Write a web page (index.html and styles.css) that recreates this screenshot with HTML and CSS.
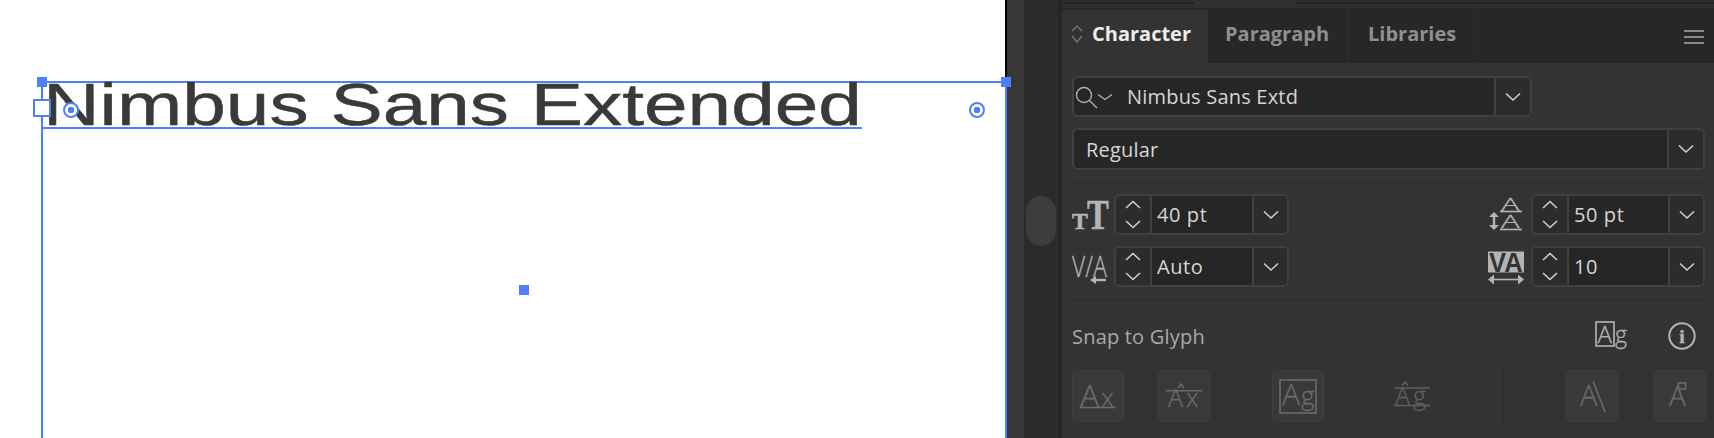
FILE: index.html
```html
<!DOCTYPE html>
<html lang="en">
<head>
  <meta charset="utf-8" />
  <title>Character panel</title>
  <link rel="stylesheet" href="styles.css">
</head>
<body>
  <div class="canvas">
    <div class="frame">
      <h1 class="sample">Nimbus Sans Extended</h1>
      <span class="handle handle-tl"></span>
      <span class="handle handle-tr"></span>
      <span class="handle handle-mid"></span>
      <span class="port"></span>
      <span class="target target-l"></span>
      <span class="target target-r"></span>
    </div>
  </div>

  <div class="rail"></div>
  <div class="dock"><div class="thumb"></div></div>

  <div class="panel">
    <div class="top-strip">
      <div class="strip-row"><div class="strip-tab"></div></div>
    </div>

    <div class="tabs">
      <div class="tab tab-on">
        <svg class="collapse" width="12" height="18" viewBox="0 0 12 18">
          <polyline points="1,6 6,1 11,6" />
          <polyline points="1,11 6,17 11,11" />
        </svg>
        <span>Character</span>
      </div>
      <div class="tab tab-para">Paragraph</div>
      <div class="tab tab-lib">Libraries</div>
      <div class="menu"><i></i><i></i><i></i></div>
    </div>

    <div class="body">
      <div class="box font-box">
        <div class="search">
          <svg width="40" height="30" viewBox="0 0 40 30">
            <circle cx="9" cy="12" r="7.5" />
            <line x1="14.500" y1="17.500" x2="22" y2="25" />
            <polyline points="23,11.500 30,16.500 37,11.500" />
          </svg>
        </div>
        <div class="box-value">Nimbus Sans Extd</div>
        <div class="box-arrow">
          <svg class="chev" width="16" height="10" viewBox="0 0 16 10"><polyline points="1,1.5 8,8 15,1.5" /></svg>
        </div>
      </div>

      <div class="box style-box">
        <div class="box-value">Regular</div>
        <div class="box-arrow">
          <svg class="chev" width="16" height="10" viewBox="0 0 16 10"><polyline points="1,1.5 8,8 15,1.5" /></svg>
        </div>
      </div>

      <hr class="rule rule-top">

      <div class="fields">
        <div class="field">
          <svg class="ico" width="42" height="36" viewBox="0 0 42 36">
            <text class="serif-b" x="0" y="31.500" font-size="24" textLength="16" lengthAdjust="spacingAndGlyphs">T</text>
            <text class="serif-b" x="15" y="31.500" font-size="42" textLength="22" lengthAdjust="spacingAndGlyphs">T</text>
          </svg>
          <div class="box num-box">
            <div class="spin">
              <svg class="chev" width="16" height="9" viewBox="0 0 16 9"><polyline points="1,8 8,1.5 15,8" /></svg>
              <svg class="chev" width="16" height="9" viewBox="0 0 16 9"><polyline points="1,1 8,7.5 15,1" /></svg>
            </div>
            <div class="box-value">40 pt</div>
            <div class="box-arrow">
              <svg class="chev" width="16" height="10" viewBox="0 0 16 10"><polyline points="1,1.5 8,8 15,1.5" /></svg>
            </div>
          </div>
        </div>

        <div class="field">
          <svg class="ico" width="43" height="38" viewBox="0 0 43 38">
            <text class="thin" x="13" y="14.500" font-size="19" textLength="19" lengthAdjust="spacingAndGlyphs">A</text>
            <line x1="12" y1="15.500" x2="34" y2="15.500" />
            <text class="thin" x="13" y="32" font-size="19" textLength="19" lengthAdjust="spacingAndGlyphs">A</text>
            <line x1="12" y1="33.500" x2="34" y2="33.500" />
            <line class="heavy" x1="6" y1="19" x2="6" y2="30" />
            <polygon class="fill" points="1,21 6,16 11,21" />
            <polygon class="fill" points="1,29 6,34 11,29" />
          </svg>
          <div class="box num-box">
            <div class="spin">
              <svg class="chev" width="16" height="9" viewBox="0 0 16 9"><polyline points="1,8 8,1.5 15,8" /></svg>
              <svg class="chev" width="16" height="9" viewBox="0 0 16 9"><polyline points="1,1 8,7.5 15,1" /></svg>
            </div>
            <div class="box-value">50 pt</div>
            <div class="box-arrow">
              <svg class="chev" width="16" height="10" viewBox="0 0 16 10"><polyline points="1,1.5 8,8 15,1.5" /></svg>
            </div>
          </div>
        </div>

        <div class="field">
          <svg class="ico" width="42" height="36" viewBox="0 0 42 36">
            <text class="thin" x="0" y="27.500" font-size="30" textLength="35" lengthAdjust="spacingAndGlyphs">V/A</text>
            <line class="heavy" x1="22" y1="31" x2="34" y2="31" />
            <polygon class="fill" points="18,31 24,27 24,35" />
          </svg>
          <div class="box num-box">
            <div class="spin">
              <svg class="chev" width="16" height="9" viewBox="0 0 16 9"><polyline points="1,8 8,1.5 15,8" /></svg>
              <svg class="chev" width="16" height="9" viewBox="0 0 16 9"><polyline points="1,1 8,7.5 15,1" /></svg>
            </div>
            <div class="box-value">Auto</div>
            <div class="box-arrow">
              <svg class="chev" width="16" height="10" viewBox="0 0 16 10"><polyline points="1,1.5 8,8 15,1.5" /></svg>
            </div>
          </div>
        </div>

        <div class="field">
          <svg class="ico" width="43" height="36" viewBox="0 0 43 36">
            <rect class="fill" x="0" y="2.500" width="36" height="21" />
            <text class="va" x="1" y="22.500" font-size="27" textLength="34" lengthAdjust="spacingAndGlyphs">VA</text>
            <line x1="3" y1="30.500" x2="33" y2="30.500" />
            <polygon class="fill" points="0,30.500 6,25.500 6,35.500" />
            <polygon class="fill" points="36,30.500 30,25.500 30,35.500" />
          </svg>
          <div class="box num-box">
            <div class="spin">
              <svg class="chev" width="16" height="9" viewBox="0 0 16 9"><polyline points="1,8 8,1.5 15,8" /></svg>
              <svg class="chev" width="16" height="9" viewBox="0 0 16 9"><polyline points="1,1 8,7.5 15,1" /></svg>
            </div>
            <div class="box-value">10</div>
            <div class="box-arrow">
              <svg class="chev" width="16" height="10" viewBox="0 0 16 10"><polyline points="1,1.5 8,8 15,1.5" /></svg>
            </div>
          </div>
        </div>
      </div>

      <hr class="rule rule-bottom">

      <div class="snap-head">
        <span class="snap-label">Snap to Glyph</span>
        <svg class="ico snap-ag" width="34" height="30" viewBox="0 0 34 30">
          <rect x="1" y="1" width="18" height="24" />
          <text class="thin" x="2.500" y="22" font-size="24">A</text>
          <text class="thin" x="20" y="22" font-size="23">g</text>
        </svg>
        <svg class="ico info" width="30" height="30" viewBox="0 0 30 30">
          <circle cx="15" cy="15" r="12.700" />
          <text class="serif-b" x="15" y="22" font-size="18" text-anchor="middle">i</text>
        </svg>
      </div>

      <div class="snap-row">
        <div class="snap-btn">
          <svg width="38" height="30" viewBox="0 0 38 30">
            <text x="1" y="25.500" font-size="32">A</text>
            <text x="22" y="25.500" font-size="26">x</text>
            <line x1="1" y1="26.500" x2="37" y2="26.500" />
          </svg>
        </div>
        <div class="snap-btn gap-1">
          <svg width="38" height="30" viewBox="0 0 38 30">
            <text x="3" y="25.500" font-size="25">A</text>
            <text x="21" y="25.500" font-size="25">x</text>
            <line x1="1" y1="9.700" x2="37" y2="9.700" />
            <polyline points="13,7 16,3 19,7" />
          </svg>
        </div>
        <div class="snap-btn gap-2">
          <svg width="38" height="38" viewBox="0 0 38 38">
            <rect x="1" y="3" width="36" height="33" />
            <text x="3" y="28" font-size="30">A</text>
            <text x="22" y="28" font-size="26">g</text>
          </svg>
        </div>
        <div class="snap-btn plain gap-2">
          <svg width="38" height="38" viewBox="0 0 38 38">
            <text x="2" y="28" font-size="25">A</text>
            <text x="20" y="28" font-size="25">g</text>
            <line x1="1" y1="11" x2="37" y2="11" />
            <line x1="1" y1="28.500" x2="37" y2="28.500" />
            <polyline points="9,8.500 12,5 15,8.500" />
          </svg>
        </div>
        <div class="snap-divider"></div>
        <div class="snap-btn">
          <svg width="30" height="36" viewBox="0 0 30 36">
            <text x="3" y="28" font-size="29">A</text>
            <line x1="16" y1="3" x2="28" y2="34" />
          </svg>
        </div>
        <div class="snap-btn gap-3">
          <svg width="24" height="30" viewBox="0 0 24 30">
            <text x="1" y="25" font-size="28">A</text>
            <rect x="10.500" y="2" width="7" height="6" />
          </svg>
        </div>
      </div>
    </div>
  </div>
</body>
</html>
```

FILE: styles.css
```css
html, body {
  margin: 0;
  padding: 0;
  height: 100%;
  overflow: hidden;
  background: #333;
}

body {
  display: flex;
  width: 1714px;
  height: 438px;
  font-family: "Open Sans", "Noto Sans", sans-serif;
}

svg { overflow: visible; }

/* Canvas */
.canvas {
  position: relative;
  flex: none;
  width: 1005px;
  background: #fff;
}

.frame {
  position: absolute;
  top: 81px;
  left: 41px;
  width: 962px;
  height: 355px;
  border: 2px solid #4f7fff;
  border-bottom: 0;
  z-index: 5;
}

.sample {
  position: absolute;
  top: -2px;
  left: 0;
  margin: 0;
  width: 627px;
  height: 46px;
  font: 400 60px/48px "Liberation Sans", sans-serif;
  color: #3a3a3a;
  -webkit-text-stroke: .5px #3a3a3a;
  white-space: nowrap;
  transform: scaleX(1.306);
  transform-origin: top left;
  border-bottom: 2px solid #4f7fff;
}

.handle {
  position: absolute;
  width: 10px;
  height: 10px;
  background: #4f7fff;
}

.handle-tl { top: -6px; left: -6px; }
.handle-tr { top: -6px; right: -6px; }
.handle-mid { top: 202px; left: 476px; }

.port {
  position: absolute;
  top: 16px;
  left: -10px;
  width: 14px;
  height: 14px;
  background: #fff;
  border: 2px solid #4f7fff;
}

.target {
  position: absolute;
  top: 19px;
  width: 12px;
  height: 12px;
  border: 2px solid #4f7fff;
  border-radius: 50%;
  background: radial-gradient(circle, #4f7fff 0 3px, #fff 3.5px);
}

.target-l { left: 20px; }
.target-r { right: 20px; }

/* Side strips */
.rail {
  flex: none;
  width: 17px;
  background: #383838;
  border-left: 2px solid #000;
}

.dock {
  flex: none;
  width: 34px;
  background: #2b2b2b;
  border-right: 4px solid #262626;
}

.thumb {
  width: 30px;
  height: 50px;
  margin: 196px 0 0 2px;
  background: #3d3d3d;
  border-radius: 15px;
}

/* Panel */
.panel {
  flex: 1;
  background: #333;
  min-width: 0;
}

.top-strip {
  height: 10px;
  box-sizing: border-box;
  padding-top: 2px;
  background: #2f2f2f;
  border-bottom: 2px solid #262626;
}

.strip-row {
  height: 2px;
  background: #232323;
}

.strip-tab {
  width: 102px;
  height: 2px;
  margin-left: 132px;
  background: #333;
}

.tabs {
  display: flex;
  height: 53px;
  background: #272727;
  font-size: 20px;
  font-weight: 700;
  color: #8f8f8f;
}

.tab {
  display: flex;
  align-items: center;
  box-sizing: border-box;
  border-right: 1px solid #2e2e2e;
  padding-bottom: 6px;
}

.tab-on {
  width: 146px;
  padding-left: 9px;
  gap: 9px;
  background: #333;
  color: #ececec;
  border-right: 0;
}

.tab-para {
  width: 141px;
  padding-left: 17px;
}

.tab-lib {
  width: 126px;
  padding-left: 19px;
}

.collapse polyline {
  fill: none;
  stroke: #7d7d7d;
  stroke-width: 1.2;
}

.menu {
  display: flex;
  flex-direction: column;
  gap: 4px;
  margin-left: auto;
  margin-right: 10px;
  padding-top: 20px;
}

.menu i {
  display: block;
  width: 20px;
  height: 2px;
  background: #8a8a8a;
}

.body {
  padding: 13px 9px 0 10px;
  color: #d6d6d6;
  font-size: 20px;
  letter-spacing: .2px;
}

.box {
  display: flex;
  box-sizing: border-box;
  height: 41px;
  background: #262626;
  border: 2px solid #404040;
  border-radius: 6px;
}

.font-box { width: 460px; }

.style-box {
  width: 633px;
  height: 42px;
  margin-top: 11px;
}

.box-value {
  flex: 1;
  display: flex;
  align-items: center;
  padding-left: 12px;
}

.font-box .box-value { padding-left: 11px; }

.box-arrow {
  flex: none;
  display: flex;
  align-items: center;
  justify-content: center;
  width: 34px;
  border-left: 2px solid #404040;
  background: #2c2c2c;
  border-radius: 0 4px 4px 0;
}

.search {
  flex: none;
  width: 42px;
  padding: 5px 0 0 1px;
  box-sizing: border-box;
}

.search svg {
  fill: none;
  stroke: #b0b0b0;
  stroke-width: 1.4;
}

.chev {
  display: block;
  fill: none;
  stroke: #cfcfcf;
  stroke-width: 1.6;
}

.spin {
  flex: none;
  display: flex;
  flex-direction: column;
  align-items: center;
  justify-content: center;
  gap: 11px;
  width: 34px;
  border-right: 2px solid #404040;
  background: #2c2c2c;
  border-radius: 4px 0 0 4px;
}

.num-box .box-value {
  padding-left: 5px;
  letter-spacing: .6px;
}

.num-box .box-arrow { width: 33px; }

.rule {
  height: 2px;
  margin: 0;
  border: 0;
  background: #2e2e2e;
}

.rule-top { margin-top: 11px; }
.rule-bottom { margin-top: 12px; }

.fields {
  display: grid;
  grid-template-columns: 1fr 1fr;
  gap: 11px 0;
  margin-top: 11px;
}

.field {
  display: flex;
  align-items: center;
  justify-content: space-between;
}

.field:nth-child(odd) {
  width: 217px;
  justify-self: start;
}

.field:nth-child(even) {
  width: 217px;
  justify-self: end;
}

.num-box { width: 175px; }

/* Icon parts */
.ico {
  flex: none;
  stroke: #b4b4b4;
  fill: none;
  stroke-width: 1.6;
}

.ico text,
.ico .fill {
  fill: #b4b4b4;
  stroke: none;
}

.ico .heavy { stroke-width: 2.4; }

.ico .thin {
  font-family: "Open Sans", sans-serif;
  font-weight: 300;
  stroke: #b4b4b4;
  stroke-width: .3;
}

.ico .serif-b {
  font-family: "Liberation Serif", serif;
  font-weight: 700;
  stroke: #b4b4b4;
  stroke-width: .6;
}

.ico .va {
  font-family: "Liberation Sans", sans-serif;
  font-weight: 700;
  fill: #333;
}

.info circle { stroke-width: 2; }

.snap-head {
  display: flex;
  align-items: center;
  height: 30px;
  margin-top: 20px;
}

.snap-label {
  flex: 1;
  color: #a9a9a9;
}

.snap-ag { margin-right: 38px; }
.info { margin-right: 8px; }

.snap-row {
  display: flex;
  align-items: center;
  margin-top: 19px;
}

.snap-btn {
  flex: none;
  display: flex;
  align-items: center;
  justify-content: center;
  box-sizing: border-box;
  width: 52px;
  height: 52px;
  background: #393939;
  border: 1px solid #3f3f3f;
  border-radius: 6px;
}

.snap-btn.plain {
  background: none;
  border-color: transparent;
}

.gap-1 { margin-left: 34px; }
.gap-2 { margin-left: 62px; }
.gap-3 { margin-left: 36px; }

.snap-btn svg {
  fill: none;
  stroke: #6b6b6b;
  stroke-width: 1.6;
}

.snap-btn.plain svg { stroke: #5f5f5f; }

.snap-btn text {
  fill: #6b6b6b;
  stroke: #6b6b6b;
  stroke-width: .3;
  font-family: "Open Sans", sans-serif;
  font-weight: 300;
  letter-spacing: 0;
}

.snap-btn.plain text {
  fill: #5f5f5f;
  stroke: #5f5f5f;
}

.snap-divider {
  flex: none;
  width: 2px;
  height: 52px;
  margin: 0 62px 0 64px;
  background: #2e2e2e;
}
```
